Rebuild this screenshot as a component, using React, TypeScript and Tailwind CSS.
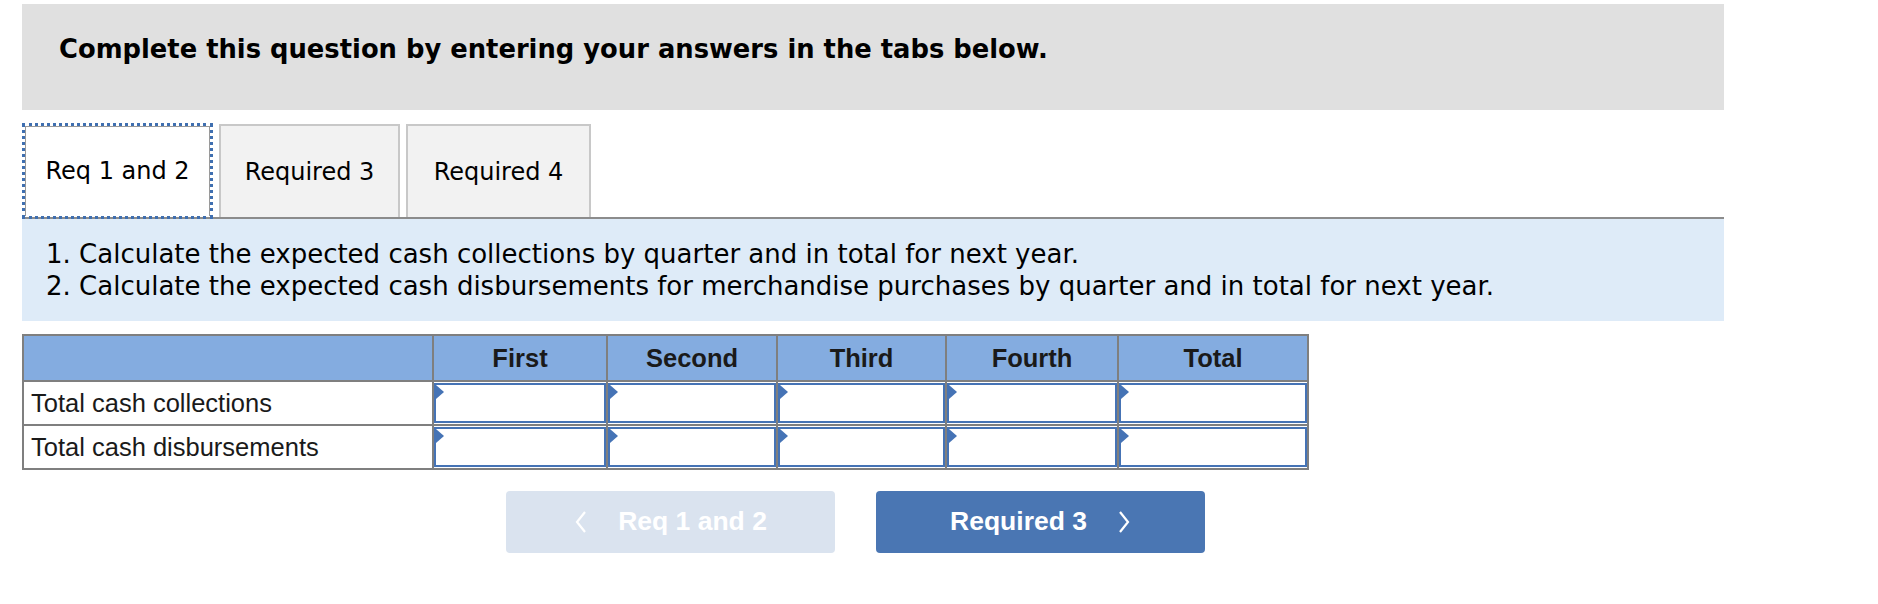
import React from 'react';

const cols = ['First', 'Second', 'Third', 'Fourth', 'Total'];
const colWidths = ['w-[174px]', 'w-[170px]', 'w-[169px]', 'w-[172px]', 'w-[190px]'];
const rows = ['Total cash collections', 'Total cash disbursements'];

function InputCell() {
  return (
    <td className="border-2 border-[#7f7f7f] p-0 h-[44px]">
      <div className="relative h-[40px] border-2 border-[#4573b5] bg-white">
        <span className="absolute left-0 top-0 w-0 h-0 border-y-[7px] border-y-transparent border-l-[8px] border-l-[#4573b5]" />
      </div>
    </td>
  );
}

export default function App() {
  return (
    <main className="w-[1878px] h-[604px] bg-white pl-[22px] pt-[4px]">
      <div className="w-[1702px]">
        {/* Banner */}
        <div className="h-[106px] bg-[#e0e0e0] pl-[37px] pt-[30px]">
          <h1 className="font-['DejaVu_Sans',Verdana,sans-serif] font-bold text-[25.8px] leading-[30px] text-black">
            Complete this question by entering your answers in the tabs below.
          </h1>
        </div>

        {/* Tabs */}
        <div className="mt-[13px] flex items-end gap-[6px] border-b-2 border-[#8c8c8c] font-['DejaVu_Sans',Verdana,sans-serif] text-[24px] text-black">
          <div className="w-[191px] h-[96px] border-[3px] border-dotted border-[#3f6fb0] -mb-[2px]">
            <div className="h-full border border-b-0 border-[#9a9a9a] bg-white flex items-center justify-center pb-[2px]">
              Req 1 and 2
            </div>
          </div>
          <div className="w-[181px] h-[93px] border-2 border-b-0 border-[#c8c8c8] bg-[#f2f2f2] flex items-center justify-center">
            Required 3
          </div>
          <div className="w-[185px] h-[93px] border-2 border-b-0 border-[#c8c8c8] bg-[#f2f2f2] flex items-center justify-center">
            Required 4
          </div>
        </div>

        {/* Instructions */}
        <div className="h-[102px] bg-[#deebf8] pl-[24px] pt-[19px] font-['DejaVu_Sans',Verdana,sans-serif] text-[26px] leading-[32px] text-black">
          <p>1. Calculate the expected cash collections by quarter and in total for next year.</p>
          <p>2. Calculate the expected cash disbursements for merchandise purchases by quarter and in total for next year.</p>
        </div>

        {/* Table */}
        <table className="mt-[13px] border-collapse border-2 border-[#7f7f7f] font-['Liberation_Sans',Arial,sans-serif] text-[25.5px] text-[#1a1a1a]">
          <thead>
            <tr className="bg-[#84ace0] h-[46px]">
              <th className="w-[410px] border-2 border-[#7f7f7f]" />
              {cols.map((c, i) => (
                <th key={c} className={`${colWidths[i]} border-2 border-[#7f7f7f] font-bold text-center`}>
                  {c}
                </th>
              ))}
            </tr>
          </thead>
          <tbody>
            {rows.map((r) => (
              <tr key={r}>
                <td className="border-2 border-[#7f7f7f] px-[7px] text-left h-[44px]">{r}</td>
                {cols.map((c) => (
                  <InputCell key={c} />
                ))}
              </tr>
            ))}
          </tbody>
        </table>

        {/* Nav buttons */}
        <div className="mt-[21px] ml-[484px] flex gap-[41px] font-['Liberation_Sans',Arial,sans-serif] font-bold text-[26.5px] text-white">
          <button className="w-[329px] h-[62px] rounded-[4px] bg-[#dae3ef] flex items-center justify-center gap-[30px]">
            <svg width="14" height="24" viewBox="0 0 14 24" fill="none" stroke="white" strokeWidth="2.2">
              <path d="M11 2 L3 12 L11 22" />
            </svg>
            <span>Req 1 and 2</span>
          </button>
          <button className="w-[329px] h-[62px] rounded-[4px] bg-[#4a76b3] flex items-center justify-center gap-[30px]">
            <span>Required 3</span>
            <svg width="14" height="24" viewBox="0 0 14 24" fill="none" stroke="white" strokeWidth="2.2">
              <path d="M3 2 L11 12 L3 22" />
            </svg>
          </button>
        </div>
      </div>
    </main>
  );
}
